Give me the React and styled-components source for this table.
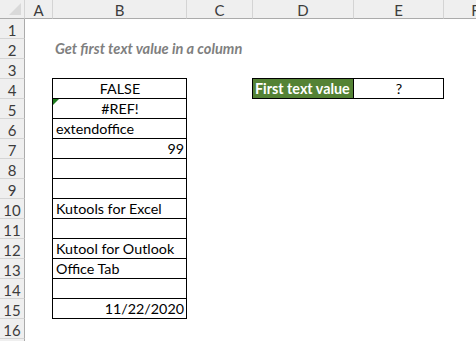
import React from "react";
import styled, { createGlobalStyle } from "styled-components";

const Global = createGlobalStyle`
  html, body { margin: 0; padding: 0; background: #fff; overflow: hidden; }
  #root { width: 476px; height: 341px; overflow: hidden; }
`;

const FONT = `"Lato", "Open Sans", sans-serif`;

const Sheet = styled.div`
  display: grid;
  grid-template-columns: 25px 27px 134px 66px 101px 90px 64px;
  grid-template-rows: 19px 19px repeat(16, 20px);
  width: 507px;
  font-family: ${FONT};
  font-size: 14.3px;
  color: #000;
  background: #fff;
`;

const Corner = styled.div`
  background: #efefef;
  border-right: 1px solid #d4d4d4;
  border-bottom: 1px solid #ababab;
  box-sizing: border-box;
  display: flex;
  align-items: flex-end;
  justify-content: flex-end;
  padding: 0 3px 3px 0;
`;

const ColHead = styled.div`
  background: #efefef;
  box-sizing: border-box;
  border-bottom: 1px solid #ababab;
  border-left: ${(p) => (p.$first ? "none" : "1px solid #d4d4d4")};
  display: flex;
  align-items: center;
  justify-content: center;
  color: #3c3c3c;
  font-size: 15px;
  padding-top: 1px;
`;

const RowHead = styled.div`
  background: #efefef;
  box-sizing: border-box;
  border-right: 1px solid #ababab;
  border-top: ${(p) => (p.$first ? "none" : "1px solid #d4d4d4")};
  display: flex;
  align-items: center;
  justify-content: center;
  color: #3c3c3c;
  font-size: 15px;
  padding-top: 2px;
`;

const Cell = styled.div`
  position: relative;
  box-sizing: border-box;
  display: flex;
  align-items: flex-end;
  padding: 0 2px 0 3px;
  white-space: nowrap;
  line-height: 18px;
`;

const Title = styled(Cell)`
  color: #7f7f7f;
  font-weight: 700;
  font-style: italic;
  font-size: 14.6px;
  overflow: visible;
`;

const BoxCell = styled(Cell)`
  border: 1px solid #000;
  border-bottom: ${(p) => (p.$last ? "1px solid #000" : "none")};
  margin-right: -1px;
  margin-bottom: ${(p) => (p.$last ? "-1px" : "0")};
  justify-content: ${(p) =>
    p.$align === "center" ? "center" : p.$align === "right" ? "flex-end" : "flex-start"};
`;

const ErrorMark = styled.svg`
  position: absolute;
  left: 0;
  top: 0;
`;

const LabelCell = styled(Cell)`
  background: #548235;
  color: #fff;
  font-weight: 700;
  border: 1px solid #000;
  border-right: none;
  margin-bottom: -1px;
  padding-left: 2px;
`;

const ValueCell = styled(Cell)`
  border: 1px solid #000;
  margin-right: -1px;
  margin-bottom: -1px;
  justify-content: center;
`;

const cols = ["A", "B", "C", "D", "E", "F"];

const tableData = {
  4: { text: "FALSE", align: "center" },
  5: { text: "#REF!", align: "center", error: true },
  6: { text: "extendoffice", align: "left" },
  7: { text: "99", align: "right" },
  8: { text: "", align: "left" },
  9: { text: "", align: "left" },
  10: { text: "Kutools for Excel", align: "left" },
  11: { text: "", align: "left" },
  12: { text: "Kutool for Outlook", align: "left" },
  13: { text: "Office Tab", align: "left" },
  14: { text: "", align: "left" },
  15: { text: "11/22/2020", align: "right" },
};

function renderCell(r, c) {
  const key = `${c}${r}`;
  if (c === "B" && r === 2) {
    return <Title key={key}>Get first text value in a column</Title>;
  }
  if (c === "B" && tableData[r]) {
    const d = tableData[r];
    return (
      <BoxCell key={key} $align={d.align} $last={r === 15}>
        {d.error && (
          <ErrorMark width="6" height="6" viewBox="0 0 6 6">
            <polygon points="0,0 6,0 0,6" fill="#1e7b1e" />
          </ErrorMark>
        )}
        {d.text}
      </BoxCell>
    );
  }
  if (c === "D" && r === 4) return <LabelCell key={key}>First text value</LabelCell>;
  if (c === "E" && r === 4) return <ValueCell key={key}>?</ValueCell>;
  return <Cell key={key} />;
}

export default function App() {
  const rows = Array.from({ length: 17 }, (_, i) => i + 1);
  return (
    <>
      <Global />
      <Sheet>
        <Corner>
          <svg width="12" height="12" viewBox="0 0 12 12">
            <polygon points="12,0 12,12 0,12" fill="#d9d9d9" />
          </svg>
        </Corner>
        {cols.map((c, i) => (
          <ColHead key={c} $first={i === 0}>
            {c}
          </ColHead>
        ))}
        {rows.map((r) => (
          <React.Fragment key={r}>
            <RowHead $first={r === 1}>{r < 17 ? r : ""}</RowHead>
            {cols.map((c) => renderCell(r, c))}
          </React.Fragment>
        ))}
      </Sheet>
    </>
  );
}
